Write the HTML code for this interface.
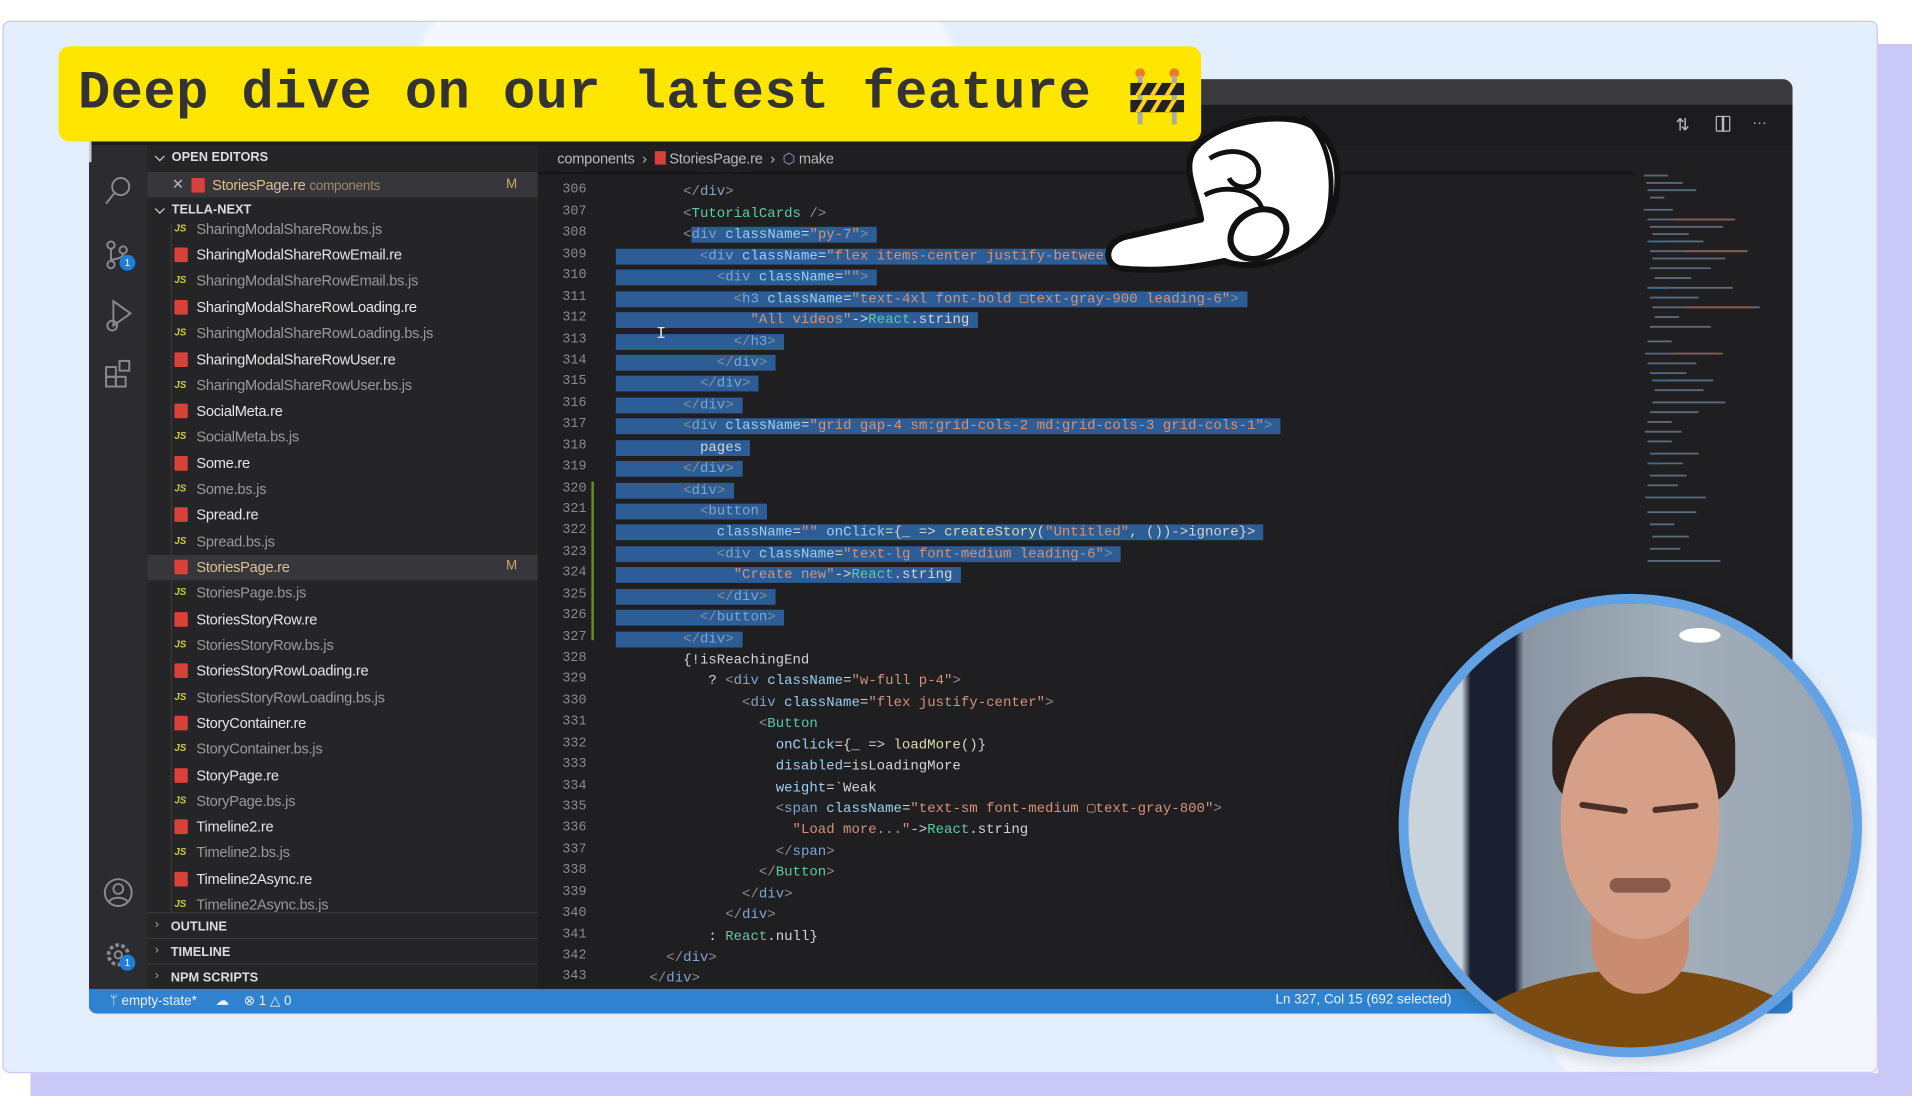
<!DOCTYPE html>
<html><head><meta charset="utf-8">
<style>
*{margin:0;padding:0;box-sizing:border-box}
html,body{width:1912px;height:1096px;overflow:hidden;background:#fff}
#w{position:absolute;left:0;top:0;width:1568px;height:899px;transform:scale(1.2194);transform-origin:0 0;font-family:"Liberation Sans",sans-serif;overflow:hidden}
.abs{position:absolute}
.lav{background:#c9c8f6}
#card{position:absolute;left:2px;top:17px;width:1538px;height:863px;border:1px solid #c9c8f6;border-radius:6px;overflow:hidden;
background:radial-gradient(ellipse 380px 300px at 560px 80px,#f4f8fe 60%,transparent 62%),radial-gradient(ellipse 300px 260px at 1460px 760px,#f3f7fd 70%,transparent 72%),#e3effc}
#vs{position:absolute;left:73px;top:65px;width:1397px;height:766px;background:#1f1e21;border-radius:8px 8px 6px 6px;overflow:hidden}
.fl{position:absolute;left:88px;font-size:12px;white-space:nowrap;letter-spacing:-0.2px}
.re{color:#e6e6e6}.js{color:#9a9a9a}
.ic{position:absolute;left:70px;width:11px;height:12px}
.icr{background:#d8403a;border-radius:1px}
.icj{color:#cbcb41;font-size:8px;font-weight:bold;font-style:italic;line-height:12px}
.ln{position:absolute;width:28px;text-align:right;font-family:"Liberation Mono",monospace;font-size:11px;color:#8a8a8a}
.cl{position:absolute;font-family:"Liberation Mono",monospace;font-size:11.5px;white-space:pre;line-height:17px;color:#d4d4d4}
.sel{background:#2c5d96}
.t{color:#7ea6d0}.a{color:#9cd0f0}.s{color:#d3937a}.p{color:#8e8e8e}.c{color:#5fc9a8}.y{color:#dcdcaa}
.sec{position:absolute;left:48px;width:320px;height:21px;border-top:1px solid #3a3a3c;font-size:10.5px;font-weight:bold;color:#ddd;padding:5px 0 0 19px}
</style></head><body>
<div id="w">
<div class="abs lav" style="left:1540px;top:36px;width:28px;height:863px"></div>
<div class="abs lav" style="left:25px;top:880px;width:1543px;height:19px"></div>
<div id="card"></div>
<div id="vs">
 <div class="abs" style="left:0;top:0;width:1397px;height:21px;background:#3a393b"></div>
 <div class="abs" style="left:0;top:21px;width:1397px;height:33px;background:#1c1b1e"></div>
 <div class="abs" style="left:1301px;top:29px;color:#bbb;font-size:14px">⇅</div>
 <div class="abs" style="left:1334px;top:30px;width:12px;height:13px;border:1.5px solid #bbb;border-radius:1px"></div>
 <div class="abs" style="left:1339px;top:30px;width:1.5px;height:13px;background:#bbb"></div>
 <div class="abs" style="left:1364px;top:28px;color:#bbb;font-size:12px">···</div>
 <div class="abs" style="left:0;top:54px;width:48px;height:692px;background:#2c2b2f"></div>
 <div class="abs" style="left:0;top:48px;width:2px;height:20px;background:#ccc"></div>
 <svg class="abs" style="left:10px;top:78px" width="28" height="260" viewBox="0 0 28 260" fill="none" stroke="#8a8a8e" stroke-width="1.6">
  <circle cx="16" cy="10" r="7"/><path d="M11 15 L4 24"/>
  <circle cx="8" cy="58" r="3"/><circle cx="8" cy="74" r="3"/><circle cx="18" cy="62" r="3"/><path d="M8 61v10M18 65c0 5-10 4-10 6"/>
  <path d="M10 104 L24 114 L10 124Z"/><circle cx="9" cy="124" r="4"/>
  <rect x="4" y="158" width="8" height="8"/><rect x="4" y="166" width="8" height="8"/><rect x="12" y="166" width="8" height="8"/><rect x="15" y="153" width="8" height="8"/>
 </svg>
 <div class="abs" style="left:25px;top:144px;width:13px;height:13px;border-radius:50%;background:#1f7fd6;color:#fff;font-size:8px;text-align:center;line-height:13px">1</div>
 <svg class="abs" style="left:10px;top:654px" width="28" height="80" fill="none" stroke="#8a8a8e" stroke-width="1.6">
  <circle cx="14" cy="13" r="11"/><circle cx="14" cy="10" r="4"/><path d="M6 21c3-5 13-5 16 0"/>
  <circle cx="14" cy="64" r="8" stroke-dasharray="3 2" stroke-width="3"/><circle cx="14" cy="64" r="3"/>
 </svg>
 <div class="abs" style="left:25px;top:718px;width:13px;height:13px;border-radius:50%;background:#1f7fd6;color:#fff;font-size:8px;text-align:center;line-height:13px">1</div>
 <div class="abs" style="left:48px;top:54px;width:320px;height:692px;background:#252427"></div>
 <div class="abs" style="left:54px;top:58px;font-size:10.5px;font-weight:bold;color:#ddd">⌵&nbsp; OPEN EDITORS</div>
 <div class="abs" style="left:48px;top:76px;width:320px;height:21px;background:#37363b"></div>
 <div class="abs" style="left:68px;top:79px;color:#bbb;font-size:12px">✕</div>
 <div class="abs icr" style="left:84px;top:81px;width:11px;height:12px"></div>
 <div class="abs" style="left:101px;top:80px;font-size:12px;color:#dcc08f;letter-spacing:-0.2px">StoriesPage.re <span style="color:#a08a6a;font-size:11px">components</span></div>
 <div class="abs" style="left:342px;top:80px;font-size:11px;color:#c9a86a">M</div>
 <div class="abs" style="left:54px;top:101px;font-size:10.5px;font-weight:bold;color:#ddd">⌵&nbsp; TELLA-NEXT</div>
 <div class="abs" style="left:67px;top:118px;width:1px;height:570px;background:#3a3a3d"></div>
 <div class="abs" style="left:48px;top:390px;width:320px;height:21px;background:#37363b"></div>
 <div class="ic icj" style="top:117px">JS</div><div class="fl js" style="top:116px">SharingModalShareRow.bs.js</div>
 <div class="ic icr" style="top:138px"></div><div class="fl re" style="top:137px">SharingModalShareRowEmail.re</div>
 <div class="ic icj" style="top:159px">JS</div><div class="fl js" style="top:158px">SharingModalShareRowEmail.bs.js</div>
 <div class="ic icr" style="top:181px"></div><div class="fl re" style="top:180px">SharingModalShareRowLoading.re</div>
 <div class="ic icj" style="top:202px">JS</div><div class="fl js" style="top:201px">SharingModalShareRowLoading.bs.js</div>
 <div class="ic icr" style="top:224px"></div><div class="fl re" style="top:223px">SharingModalShareRowUser.re</div>
 <div class="ic icj" style="top:245px">JS</div><div class="fl js" style="top:244px">SharingModalShareRowUser.bs.js</div>
 <div class="ic icr" style="top:266px"></div><div class="fl re" style="top:265px">SocialMeta.re</div>
 <div class="ic icj" style="top:287px">JS</div><div class="fl js" style="top:286px">SocialMeta.bs.js</div>
 <div class="ic icr" style="top:309px"></div><div class="fl re" style="top:308px">Some.re</div>
 <div class="ic icj" style="top:330px">JS</div><div class="fl js" style="top:329px">Some.bs.js</div>
 <div class="ic icr" style="top:351px"></div><div class="fl re" style="top:350px">Spread.re</div>
 <div class="ic icj" style="top:373px">JS</div><div class="fl js" style="top:372px">Spread.bs.js</div>
 <div class="ic icr" style="top:394px"></div><div class="fl" style="top:393px;color:#dcc08f">StoriesPage.re</div><div class="abs" style="left:342px;top:393px;font-size:11px;color:#c9a86a">M</div>
 <div class="ic icj" style="top:415px">JS</div><div class="fl js" style="top:414px">StoriesPage.bs.js</div>
 <div class="ic icr" style="top:437px"></div><div class="fl re" style="top:436px">StoriesStoryRow.re</div>
 <div class="ic icj" style="top:458px">JS</div><div class="fl js" style="top:457px">StoriesStoryRow.bs.js</div>
 <div class="ic icr" style="top:479px"></div><div class="fl re" style="top:478px">StoriesStoryRowLoading.re</div>
 <div class="ic icj" style="top:501px">JS</div><div class="fl js" style="top:500px">StoriesStoryRowLoading.bs.js</div>
 <div class="ic icr" style="top:522px"></div><div class="fl re" style="top:521px">StoryContainer.re</div>
 <div class="ic icj" style="top:543px">JS</div><div class="fl js" style="top:542px">StoryContainer.bs.js</div>
 <div class="ic icr" style="top:565px"></div><div class="fl re" style="top:564px">StoryPage.re</div>
 <div class="ic icj" style="top:586px">JS</div><div class="fl js" style="top:585px">StoryPage.bs.js</div>
 <div class="ic icr" style="top:607px"></div><div class="fl re" style="top:606px">Timeline2.re</div>
 <div class="ic icj" style="top:628px">JS</div><div class="fl js" style="top:627px">Timeline2.bs.js</div>
 <div class="ic icr" style="top:650px"></div><div class="fl re" style="top:649px">Timeline2Async.re</div>
 <div class="ic icj" style="top:671px">JS</div><div class="fl js" style="top:670px">Timeline2Async.bs.js</div>
 <div class="sec" style="top:683px;background:#252427">OUTLINE</div>
 <div class="sec" style="top:704px">TIMELINE</div>
 <div class="sec" style="top:725px">NPM SCRIPTS</div>
 <div class="abs" style="left:54px;top:688px;color:#aaa;font-size:10px">›</div>
 <div class="abs" style="left:54px;top:709px;color:#aaa;font-size:10px">›</div>
 <div class="abs" style="left:54px;top:730px;color:#aaa;font-size:10px">›</div>
 <div class="abs" style="left:412px;top:330px;width:2px;height:130px;background:#6b8e23"></div>
 <svg class="abs" style="left:1270px;top:75px" width="100" height="360">
  <g stroke-width="1.5">
  <path d="M5 4h20M7 10h30M8 16h40M10 22h12M5 32h24M8 40h70M10 46h60M12 52h30M14 58h40M10 66h80M12 72h60M10 80h50M14 88h30M8 96h70M10 104h40M12 112h90M14 120h20M10 128h50M8 140h20M6 150h60M8 158h40M10 166h30M12 172h50M14 180h40M12 190h60M10 198h40M8 206h20M6 214h30M8 222h20M10 232h40M12 240h25M10 250h30M8 258h25M6 268h50M8 280h40M10 290h20M12 300h30M10 310h25M8 320h60" stroke="#5a6a7a"/>
  <path d="M30 40h50M40 66h50M40 112h55M30 150h40" stroke="#8a5a50"/>
  <path d="M8 58h14M10 96h16M12 172h14M8 240h12" stroke="#3a6a9a"/>
  </g>
 </svg>
 <div class="abs" style="left:0;top:746px;width:1397px;height:20px;background:#2f82cf"></div>
 <div class="abs" style="left:17px;top:749px;font-size:11px;color:#e8f0ff">ᛘ empty-state* &nbsp;&nbsp;&nbsp; ☁ &nbsp;&nbsp; ⊗ 1 △ 0</div>
 <div class="abs" style="left:973px;top:749px;font-size:11px;color:#e8f0ff">Ln 327, Col 15 (692 selected)</div>
</div>
<!-- code -->
<div id="code" style="position:absolute;left:0;top:0">
<div class="ln" style="left:453px;top:133px">305</div><div class="cl" style="left:505px;top:132px"><span class="p">          &lt;/div&gt;</span></div>
<div class="ln" style="left:453px;top:150px">306</div><div class="cl" style="left:505px;top:149px">        <span class="p">&lt;/</span><span class="t">div</span><span class="p">&gt;</span></div>
<div class="ln" style="left:453px;top:168px">307</div><div class="cl" style="left:505px;top:167px">        <span class="p">&lt;</span><span class="c">TutorialCards</span> <span class="p">/&gt;</span></div>
<div class="ln" style="left:453px;top:185px">308</div><div class="cl" style="left:505px;top:184px">        <span class="p">&lt;</span><span class="sel"><span class="t">div</span> <span class="a">className</span>=<span class="s">"py-7"</span><span class="p">&gt;</span> </span></div>
<div class="ln" style="left:453px;top:203px">309</div><div class="cl" style="left:505px;top:202px"><span class="sel">          <span class="p">&lt;</span><span class="t">div</span> <span class="a">className</span>=<span class="s">"flex items-center justify-between"</span><span class="p">&gt;</span> </span></div>
<div class="ln" style="left:453px;top:220px">310</div><div class="cl" style="left:505px;top:219px"><span class="sel">            <span class="p">&lt;</span><span class="t">div</span> <span class="a">className</span>=<span class="s">""</span><span class="p">&gt;</span> </span></div>
<div class="ln" style="left:453px;top:238px">311</div><div class="cl" style="left:505px;top:237px"><span class="sel">              <span class="p">&lt;</span><span class="t">h3</span> <span class="a">className</span>=<span class="s">"text-4xl font-bold ▢text-gray-900 leading-6"</span><span class="p">&gt;</span> </span></div>
<div class="ln" style="left:453px;top:255px">312</div><div class="cl" style="left:505px;top:254px"><span class="sel">                <span class="s">"All videos"</span>-&gt;<span class="c">React</span>.string </span></div>
<div class="ln" style="left:453px;top:273px">313</div><div class="cl" style="left:505px;top:272px"><span class="sel">              <span class="p">&lt;/</span><span class="t">h3</span><span class="p">&gt;</span> </span></div>
<div class="ln" style="left:453px;top:290px">314</div><div class="cl" style="left:505px;top:289px"><span class="sel">            <span class="p">&lt;/</span><span class="t">div</span><span class="p">&gt;</span> </span></div>
<div class="ln" style="left:453px;top:307px">315</div><div class="cl" style="left:505px;top:306px"><span class="sel">          <span class="p">&lt;/</span><span class="t">div</span><span class="p">&gt;</span> </span></div>
<div class="ln" style="left:453px;top:325px">316</div><div class="cl" style="left:505px;top:324px"><span class="sel">        <span class="p">&lt;/</span><span class="t">div</span><span class="p">&gt;</span> </span></div>
<div class="ln" style="left:453px;top:342px">317</div><div class="cl" style="left:505px;top:341px"><span class="sel">        <span class="p">&lt;</span><span class="t">div</span> <span class="a">className</span>=<span class="s">"grid gap-4 sm:grid-cols-2 md:grid-cols-3 grid-cols-1"</span><span class="p">&gt;</span> </span></div>
<div class="ln" style="left:453px;top:360px">318</div><div class="cl" style="left:505px;top:359px"><span class="sel">          pages </span></div>
<div class="ln" style="left:453px;top:377px">319</div><div class="cl" style="left:505px;top:376px"><span class="sel">        <span class="p">&lt;/</span><span class="t">div</span><span class="p">&gt;</span> </span></div>
<div class="ln" style="left:453px;top:395px">320</div><div class="cl" style="left:505px;top:394px"><span class="sel">        <span class="p">&lt;</span><span class="t">div</span><span class="p">&gt;</span> </span></div>
<div class="ln" style="left:453px;top:412px">321</div><div class="cl" style="left:505px;top:411px"><span class="sel">          <span class="p">&lt;</span><span class="t">button</span> </span></div>
<div class="ln" style="left:453px;top:429px">322</div><div class="cl" style="left:505px;top:428px"><span class="sel">            <span class="a">className</span>=<span class="s">""</span> <span class="a">onClick</span>={_ =&gt; <span class="y">createStory</span>(<span class="s">"Untitled"</span>, ())-&gt;ignore}&gt; </span></div>
<div class="ln" style="left:453px;top:447px">323</div><div class="cl" style="left:505px;top:446px"><span class="sel">            <span class="p">&lt;</span><span class="t">div</span> <span class="a">className</span>=<span class="s">"text-lg font-medium leading-6"</span><span class="p">&gt;</span> </span></div>
<div class="ln" style="left:453px;top:464px">324</div><div class="cl" style="left:505px;top:463px"><span class="sel">              <span class="s">"Create new"</span>-&gt;<span class="c">React</span>.string </span></div>
<div class="ln" style="left:453px;top:482px">325</div><div class="cl" style="left:505px;top:481px"><span class="sel">            <span class="p">&lt;/</span><span class="t">div</span><span class="p">&gt;</span> </span></div>
<div class="ln" style="left:453px;top:499px">326</div><div class="cl" style="left:505px;top:498px"><span class="sel">          <span class="p">&lt;/</span><span class="t">button</span><span class="p">&gt;</span> </span></div>
<div class="ln" style="left:453px;top:517px">327</div><div class="cl" style="left:505px;top:516px"><span class="sel">        <span class="p">&lt;/</span><span class="t">div</span><span class="p">&gt;</span> </span></div>
<div class="ln" style="left:453px;top:534px">328</div><div class="cl" style="left:505px;top:533px">        {!isReachingEnd</div>
<div class="ln" style="left:453px;top:551px">329</div><div class="cl" style="left:505px;top:550px">           ? <span class="p">&lt;</span><span class="t">div</span> <span class="a">className</span>=<span class="s">"w-full p-4"</span><span class="p">&gt;</span></div>
<div class="ln" style="left:453px;top:569px">330</div><div class="cl" style="left:505px;top:568px">               <span class="p">&lt;</span><span class="t">div</span> <span class="a">className</span>=<span class="s">"flex justify-center"</span><span class="p">&gt;</span></div>
<div class="ln" style="left:453px;top:586px">331</div><div class="cl" style="left:505px;top:585px">                 <span class="p">&lt;</span><span class="c">Button</span></div>
<div class="ln" style="left:453px;top:604px">332</div><div class="cl" style="left:505px;top:603px">                   <span class="a">onClick</span>={_ =&gt; <span class="y">loadMore</span>()}</div>
<div class="ln" style="left:453px;top:621px">333</div><div class="cl" style="left:505px;top:620px">                   <span class="a">disabled</span>=isLoadingMore</div>
<div class="ln" style="left:453px;top:639px">334</div><div class="cl" style="left:505px;top:638px">                   <span class="a">weight</span>=`Weak</div>
<div class="ln" style="left:453px;top:656px">335</div><div class="cl" style="left:505px;top:655px">                   <span class="p">&lt;</span><span class="t">span</span> <span class="a">className</span>=<span class="s">"text-sm font-medium ▢text-gray-800"</span><span class="p">&gt;</span></div>
<div class="ln" style="left:453px;top:673px">336</div><div class="cl" style="left:505px;top:672px">                     <span class="s">"Load more..."</span>-&gt;<span class="c">React</span>.string</div>
<div class="ln" style="left:453px;top:691px">337</div><div class="cl" style="left:505px;top:690px">                   <span class="p">&lt;/</span><span class="t">span</span><span class="p">&gt;</span></div>
<div class="ln" style="left:453px;top:708px">338</div><div class="cl" style="left:505px;top:707px">                 <span class="p">&lt;/</span><span class="c">Button</span><span class="p">&gt;</span></div>
<div class="ln" style="left:453px;top:726px">339</div><div class="cl" style="left:505px;top:725px">               <span class="p">&lt;/</span><span class="t">div</span><span class="p">&gt;</span></div>
<div class="ln" style="left:453px;top:743px">340</div><div class="cl" style="left:505px;top:742px">             <span class="p">&lt;/</span><span class="t">div</span><span class="p">&gt;</span></div>
<div class="ln" style="left:453px;top:761px">341</div><div class="cl" style="left:505px;top:760px">           : <span class="c">React</span>.null}</div>
<div class="ln" style="left:453px;top:778px">342</div><div class="cl" style="left:505px;top:777px">      <span class="p">&lt;/</span><span class="t">div</span><span class="p">&gt;</span></div>
<div class="ln" style="left:453px;top:795px">343</div><div class="cl" style="left:505px;top:794px">    <span class="p">&lt;/</span><span class="t">div</span><span class="p">&gt;</span></div>
<div class="abs" style="left:538px;top:266px;color:#ddd;font-size:14px;font-family:'Liberation Mono',monospace">I</div>
</div>
<!-- breadcrumb -->
<div class="abs" style="left:441px;top:119px;width:900px;height:22px;background:#1f1e21"></div>
<div class="abs" style="left:457px;top:123px;font-size:12px;color:#bbb;letter-spacing:-0.2px">components &nbsp;›&nbsp; <span style="display:inline-block;width:9px;height:11px;background:#d8403a;vertical-align:-1px"></span> StoriesPage.re &nbsp;›&nbsp; <span style="color:#b48ee0">⬡</span> make</div>
<div class="abs" style="left:441px;top:141px;width:900px;height:2px;background:#151416"></div>
<!-- banner -->
<div class="abs" style="left:48px;top:38px;width:937px;height:78px;background:#ffe600;border-radius:9px"></div>
<div class="abs" style="left:64px;top:52px;font-family:'Liberation Mono',monospace;font-size:44px;font-weight:bold;color:#333;letter-spacing:0.4px;white-space:nowrap">Deep dive on our latest feature</div>
<svg class="abs" style="left:925px;top:54px" width="48" height="50">
 <circle cx="10" cy="6" r="4" fill="#f07a2a"/><circle cx="38" cy="6" r="4" fill="#f07a2a"/>
 <rect x="8" y="8" width="4" height="40" fill="#aaa"/><rect x="36" y="8" width="4" height="40" fill="#aaa"/>
 <rect x="2" y="14" width="44" height="10" fill="#222"/><rect x="2" y="28" width="44" height="10" fill="#222"/>
 <path d="M6 24l6-10h4l-6 10zM18 24l6-10h4l-6 10zM30 24l6-10h4l-6 10zM6 38l6-10h4l-6 10zM18 38l6-10h4l-6 10zM30 38l6-10h4l-6 10z" fill="#ffd21a"/>
</svg>
<!-- hand -->
<svg class="abs" style="left:900px;top:90px" width="205" height="140" viewBox="0 0 205 140">
 <g stroke="#111" stroke-width="5" fill="#fff" stroke-linejoin="round">
  <path d="M18 130 C4 126 6 108 24 104 L85 90 C82 70 70 50 78 35 C90 15 130 4 160 8 C190 12 200 40 196 70 C192 95 178 110 160 118 C140 128 118 130 104 124 C78 130 48 133 18 130Z"/>
  <path d="M168 6 C190 22 198 60 186 98" fill="none" stroke-width="4"/>
  <path d="M92 40 C110 28 135 36 132 54 C130 66 112 66 108 56" fill="none" stroke-width="4"/>
  <path d="M88 70 C105 60 132 66 135 82" fill="none" stroke-width="4"/>
  <ellipse cx="132" cy="102" rx="24" ry="19" transform="rotate(-30 132 102)"/>
 </g>
</svg>
<!-- webcam -->
<div class="abs" style="left:1147px;top:487px;width:380px;height:380px;border-radius:50%;border:8px solid #62a2e4;overflow:hidden;background:linear-gradient(90deg,#c9d3dc 0,#c9d3dc 12%,#1a2030 14%,#1a2030 24%,#8996a3 26%,#a2aeb9 60%,#98a4af 100%);box-shadow:0 4px 12px rgba(0,0,0,.15)">
 <div class="abs" style="left:222px;top:20px;width:34px;height:12px;border-radius:50%;background:#fff"></div>
 <div class="abs" style="left:30px;top:300px;width:320px;height:160px;border-radius:50%;background:#7a4a10"></div>
 <div class="abs" style="left:150px;top:220px;width:80px;height:100px;background:#c98c70;border-radius:0 0 40px 40px"></div>
 <div class="abs" style="left:118px;top:60px;width:150px;height:110px;border-radius:50% 50% 30% 30%;background:#2e211c"></div>
 <div class="abs" style="left:125px;top:90px;width:130px;height:185px;border-radius:45% 45% 50% 50%;background:#d6a088"></div>
 <div class="abs" style="left:140px;top:165px;width:40px;height:5px;background:#4a3028;border-radius:3px;transform:rotate(8deg)"></div>
 <div class="abs" style="left:200px;top:165px;width:38px;height:5px;background:#4a3028;border-radius:3px;transform:rotate(-6deg)"></div>
 <div class="abs" style="left:165px;top:225px;width:50px;height:12px;background:#8a5a4a;border-radius:6px"></div>
</div>
</div>
</body></html>
